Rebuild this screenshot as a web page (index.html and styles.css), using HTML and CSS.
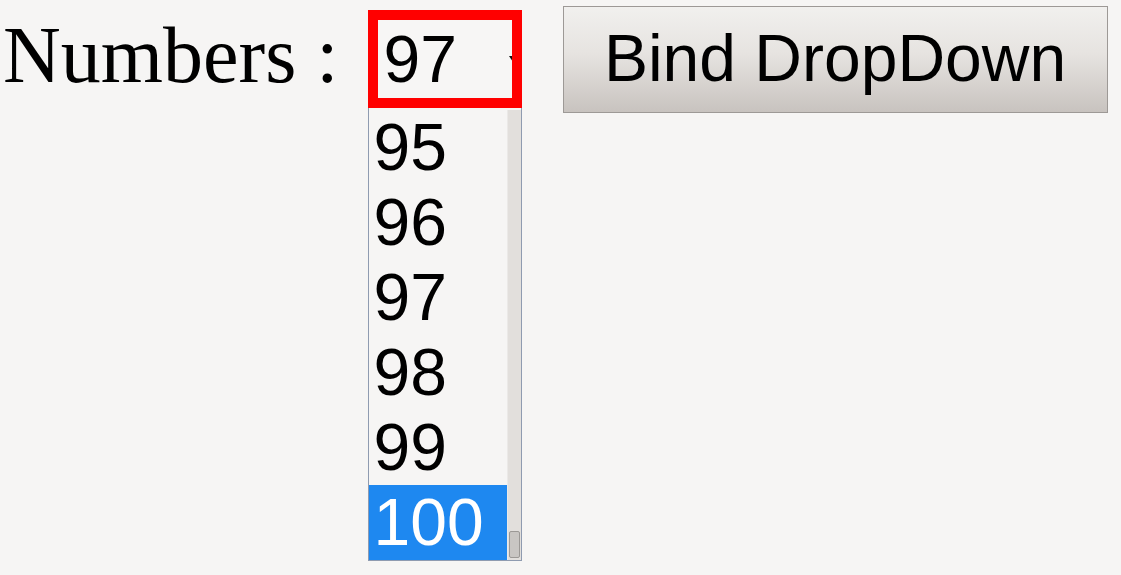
FILE: index.html
```html
<!DOCTYPE html>
<html>
<head>
<meta charset="utf-8">
<link rel="stylesheet" href="styles.css">
</head>
<body>
<div class="row">
  <span class="label">Numbers :</span>
  <div class="select">
    <div class="select-box">
      <span class="value">97</span>
      <span class="arrow"></span>
    </div>
    <div class="list">
      <ul class="items">
        <li class="item">95</li>
        <li class="item">96</li>
        <li class="item">97</li>
        <li class="item">98</li>
        <li class="item">99</li>
        <li class="item selected">100</li>
      </ul>
      <div class="scrollbar"><div class="thumb"></div></div>
    </div>
  </div>
  <button class="btn">Bind DropDown</button>
</div>
</body>
</html>
```
FILE: styles.css
```css
html, body {
  margin: 0;
  padding: 0;
  background: #f6f5f4;
}
body {
  width: 1121px;
  height: 575px;
  overflow: hidden;
}
.row {
  display: flex;
  align-items: flex-start;
  padding-left: 3px;
}
.label {
  font-family: "Liberation Serif", "Times New Roman", serif;
  font-size: 80px;
  line-height: 80px;
  margin-top: 15px;
  margin-right: 29px;
  color: #000;
  white-space: nowrap;
}
.select {
  position: relative;
  margin-top: 10px;
  width: 154px;
}
.select-box {
  box-sizing: border-box;
  width: 154px;
  height: 98px;
  border: 10px solid #ff0000;
  position: relative;
  overflow: hidden;
  background: #f7f6f5;
}
.value {
  display: block;
  font-family: "Liberation Sans", Arial, sans-serif;
  font-size: 66px;
  line-height: 78px;
  padding-left: 6px;
  color: #000;
}
.arrow {
  position: absolute;
  left: 131px;
  top: 36px;
  width: 0;
  height: 0;
  border-left: 4px solid transparent;
  border-right: 4px solid transparent;
  border-top: 6px solid #111;
}
.list {
  position: absolute;
  top: 100%;
  left: 0;
  box-sizing: border-box;
  width: 154px;
  border: 1px solid #8f9bb0;
  border-top: none;
  background: #f6f5f4;
  display: flex;
  padding-top: 2px;
}
.items {
  list-style: none;
  margin: 0;
  padding: 0;
  width: 138px;
}
.item {
  height: 75px;
  font-family: "Liberation Sans", Arial, sans-serif;
  font-size: 66px;
  line-height: 75px;
  padding-left: 5px;
  color: #000;
}
.item.selected {
  background: #1e88f0;
  color: #fff;
}
.scrollbar {
  flex: 1;
  background: #e2dfdc;
  border-left: 1px solid #ebe9e7;
  display: flex;
  flex-direction: column;
  justify-content: flex-end;
  align-items: center;
  padding-bottom: 2px;
}
.thumb {
  width: 9px;
  height: 25px;
  background: #c9c6c3;
  border: 1px solid #9c9996;
  border-radius: 2px;
}
.btn {
  margin-left: 41px;
  margin-top: 6px;
  width: 545px;
  height: 107px;
  box-sizing: border-box;
  border: 1px solid #9d9996;
  border-radius: 0;
  background: linear-gradient(to bottom, #f1f0ee 0%, #e6e3e0 45%, #c8c3bf 100%);
  font-family: "Liberation Sans", Arial, sans-serif;
  font-size: 66px;
  color: #000;
  padding: 0;
  line-height: 1;
  display: flex;
  align-items: center;
  justify-content: center;
  padding-bottom: 4px;
}
```
